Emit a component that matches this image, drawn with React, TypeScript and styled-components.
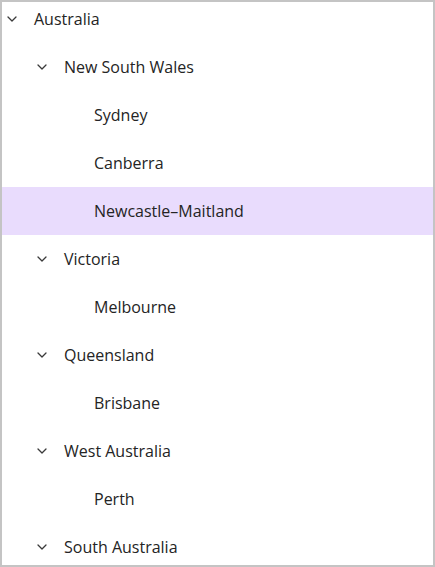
import React, { useLayoutEffect, useRef } from "react";
import styled, { createGlobalStyle } from "styled-components";

const GlobalStyle = createGlobalStyle`
  html, body {
    margin: 0;
    padding: 0;
    background: #ffffff;
  }
  * {
    box-sizing: border-box;
  }
`;

type Node = {
  label: string;
  selected?: boolean;
  children?: Node[];
};

const tree: Node[] = [
  {
    label: "Australia",
    children: [
      {
        label: "New South Wales",
        children: [
          { label: "Sydney" },
          { label: "Canberra" },
          { label: "Newcastle–Maitland", selected: true },
        ],
      },
      { label: "Victoria", children: [{ label: "Melbourne" }] },
      { label: "Queensland", children: [{ label: "Brisbane" }] },
      { label: "West Australia", children: [{ label: "Perth" }] },
      { label: "South Australia", children: [{ label: "Adelaide" }] },
    ],
  },
];

const Frame = styled.div`
  width: 435px;
  height: 567px;
  border: 2px solid #c4c4c4;
  overflow: hidden;
  font-family: "Open Sans", "Noto Sans", sans-serif;
`;

const List = styled.ul`
  list-style: none;
  margin: 0;
  padding: 0;
`;

const Row = styled.li<{ $level: number; $selected?: boolean }>`
  display: flex;
  align-items: center;
  gap: 12px;
  height: 48px;
  padding-left: ${(p) => p.$level * 30}px;
  background: ${(p) => (p.$selected ? "#e9dcfd" : "transparent")};
  color: #242424;
  font-size: 16px;
`;

const Toggle = styled.span`
  display: flex;
  align-items: center;
  justify-content: center;
  width: 20px;
  height: 20px;
  color: #3a3a3a;
`;

const Label = styled.span`
  white-space: nowrap;
`;

const Chevron = () => (
  <svg width="10" height="6" viewBox="0 0 10 6" fill="none">
    <path
      d="M1 1 L5 5 L9 1"
      stroke="currentColor"
      strokeWidth="1.3"
      strokeLinecap="round"
      strokeLinejoin="round"
    />
  </svg>
);

const flatten = (nodes: Node[], level = 0): { node: Node; level: number }[] =>
  nodes.flatMap((node) => [
    { node, level },
    ...(node.children ? flatten(node.children, level + 1) : []),
  ]);

const App = () => {
  const frameRef = useRef<HTMLDivElement>(null);

  // the tree sits slightly scrolled down
  useLayoutEffect(() => {
    if (frameRef.current) frameRef.current.scrollTop = 7;
  }, []);

  return (
    <>
      <GlobalStyle />
      <Frame ref={frameRef}>
        <List>
          {flatten(tree).map(({ node, level }, i) => (
            <Row key={i} $level={level} $selected={node.selected}>
              <Toggle>{node.children ? <Chevron /> : null}</Toggle>
              <Label>{node.label}</Label>
            </Row>
          ))}
        </List>
      </Frame>
    </>
  );
};

export default App;
